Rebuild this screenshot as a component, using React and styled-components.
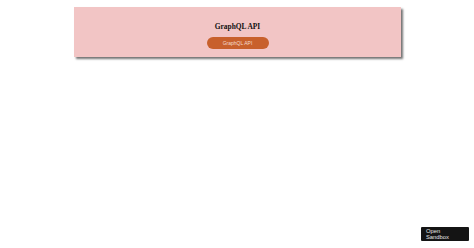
import React from "react";
import styled, { createGlobalStyle } from "styled-components";

const GlobalStyle = createGlobalStyle`
  html, body {
    margin: 0;
    padding: 0;
    background: #ffffff;
  }
  body {
    font-family: "Liberation Serif", "Times New Roman", serif;
  }
`;

const Page = styled.div`
  width: 474px;
  height: 248px;
  display: flex;
  flex-direction: column;
  align-items: center;
  padding-top: 7px;
  box-sizing: border-box;
`;

const Card = styled.div`
  width: 327px;
  height: 50px;
  margin-left: 1px;
  background: #f2c5c5;
  box-shadow: 1.5px 1.5px 2px rgba(0, 0, 0, 0.55);
  display: flex;
  flex-direction: column;
  align-items: center;
  box-sizing: border-box;
  padding-top: 14px;
`;

const Title = styled.h1`
  margin: 0;
  font-family: "Liberation Serif", "Times New Roman", serif;
  font-size: 7.4px;
  font-weight: bold;
  color: #111;
  line-height: 9px;
  transform: scaleY(1.2);
`;

const Button = styled.button`
  margin-top: 7px;
  width: 62px;
  height: 12px;
  border: none;
  border-radius: 6px;
  background: #c8602c;
  color: #f4dccf;
  font-family: "Liberation Sans", Arial, sans-serif;
  font-size: 5px;
  padding: 0;
  display: flex;
  align-items: center;
  justify-content: center;
`;

const Sandbox = styled.a`
  position: fixed;
  right: 5px;
  bottom: 7px;
  width: 48px;
  height: 14px;
  box-sizing: border-box;
  background: #141414;
  color: #e8e8e8;
  border-radius: 1px;
  font-family: "Liberation Sans", Arial, sans-serif;
  font-size: 5.8px;
  line-height: 6px;
  padding: 1px 0 0 5px;
  text-decoration: none;
`;

export default function App() {
  return (
    <>
      <GlobalStyle />
      <Page>
        <Card>
          <Title>GraphQL API</Title>
          <Button>GraphQL API</Button>
        </Card>
      </Page>
      <Sandbox href="#">
        Open
        <br />
        Sandbox
      </Sandbox>
    </>
  );
}
